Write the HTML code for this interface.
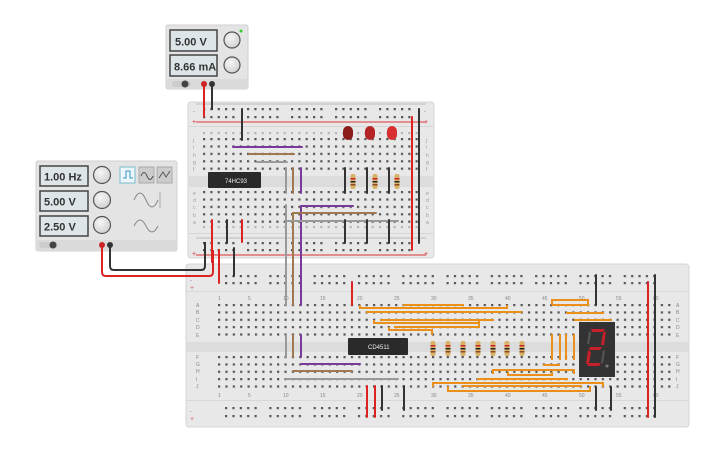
<!DOCTYPE html>
<html><head><meta charset="utf-8"><style>
html,body{margin:0;padding:0;background:#fff;width:725px;height:453px;overflow:hidden}
svg{display:block}
text{font-family:"Liberation Sans",sans-serif}
</style></head><body>
<svg width="725" height="453" viewBox="0 0 725 453" xmlns="http://www.w3.org/2000/svg">
<defs>
<pattern id="h1" x="0" y="0" width="7.33" height="7.4" patternUnits="userSpaceOnUse"><rect x="0" y="0" width="2.2" height="2.2" fill="#555"/></pattern>
<pattern id="r1" x="0" y="0" width="44" height="7.6" patternUnits="userSpaceOnUse"><rect x="0" y="0" width="2.2" height="2.2" fill="#555"/><rect x="7.33" y="0" width="2.2" height="2.2" fill="#555"/><rect x="14.66" y="0" width="2.2" height="2.2" fill="#555"/><rect x="22" y="0" width="2.2" height="2.2" fill="#555"/><rect x="29.3" y="0" width="2.2" height="2.2" fill="#555"/></pattern>
<pattern id="h2" x="0" y="0" width="7.38" height="7.35" patternUnits="userSpaceOnUse"><rect x="0" y="0" width="2.2" height="2.2" fill="#555"/></pattern>
<pattern id="r2" x="0" y="0" width="44.3" height="7.6" patternUnits="userSpaceOnUse"><rect x="0" y="0" width="2.2" height="2.2" fill="#555"/><rect x="7.38" y="0" width="2.2" height="2.2" fill="#555"/><rect x="14.76" y="0" width="2.2" height="2.2" fill="#555"/><rect x="22.1" y="0" width="2.2" height="2.2" fill="#555"/><rect x="29.5" y="0" width="2.2" height="2.2" fill="#555"/></pattern>
<g id="res"><rect x="-2.5" y="0" width="5" height="15" rx="2" fill="#d9b26a"/><rect x="-2.5" y="4" width="5" height="1.5" fill="#c22"/><rect x="-2.5" y="7" width="5" height="1.5" fill="#222"/><rect x="-2.5" y="10" width="5" height="1.5" fill="#8a4a1a"/></g>
<radialGradient id="kn" cx="0.4" cy="0.35" r="0.7"><stop offset="0" stop-color="#f6f6f6"/><stop offset="1" stop-color="#cfcfcf"/></radialGradient>
</defs>

<!-- Power supply -->
<rect x="166" y="25" width="82" height="64" rx="2" fill="#e4e4e4" stroke="#d0d0d0"/>
<rect x="170" y="30" width="47" height="21" fill="#dde5e8" stroke="#444" stroke-width="1.5"/>
<text x="175" y="45.5" font-size="11" font-weight="bold" fill="#333">5.00 V</text>
<rect x="170" y="55" width="47" height="21" fill="#dde5e8" stroke="#444" stroke-width="1.5"/>
<text x="174" y="70.5" font-size="11" font-weight="bold" fill="#333">8.66 mA</text>
<circle cx="232" cy="40" r="8" fill="url(#kn)" stroke="#555" stroke-width="1.2"/>
<circle cx="232" cy="65" r="8" fill="url(#kn)" stroke="#555" stroke-width="1.2"/>
<circle cx="241" cy="31" r="1.5" fill="#3c3"/>
<rect x="166" y="79" width="82" height="10" fill="#dadada"/>
<rect x="172" y="81" width="19" height="6" rx="3" fill="#ccc"/><circle cx="185" cy="84" r="3.5" fill="#444"/>

<!-- Function generator -->
<rect x="36" y="161" width="141" height="90" rx="2" fill="#e4e4e4" stroke="#d0d0d0"/>
<rect x="40" y="166" width="48" height="20" fill="#dde5e8" stroke="#444" stroke-width="1.5"/>
<text x="44" y="180.5" font-size="11" font-weight="bold" fill="#333">1.00 Hz</text>
<rect x="40" y="191" width="48" height="20" fill="#dde5e8" stroke="#444" stroke-width="1.5"/>
<text x="44" y="205.5" font-size="11" font-weight="bold" fill="#333">5.00 V</text>
<rect x="40" y="216" width="48" height="20" fill="#dde5e8" stroke="#444" stroke-width="1.5"/>
<text x="44" y="230.5" font-size="11" font-weight="bold" fill="#333">2.50 V</text>
<circle cx="102" cy="175" r="8.5" fill="url(#kn)" stroke="#555" stroke-width="1.2"/>
<circle cx="102" cy="200" r="8.5" fill="url(#kn)" stroke="#555" stroke-width="1.2"/>
<circle cx="102" cy="225" r="8.5" fill="url(#kn)" stroke="#555" stroke-width="1.2"/>
<rect x="120" y="167" width="15" height="16" fill="#eef6fb" stroke="#7bc" />
<path d="M123 178 h3 v-7 h4 v7 h3" fill="none" stroke="#39c" stroke-width="1"/>
<rect x="139" y="167" width="15" height="16" fill="#ccc" stroke="#aaa"/>
<path d="M141 176 q3 -7 6 0 t6 0" fill="none" stroke="#555"/>
<rect x="157" y="167" width="15" height="16" fill="#ccc" stroke="#aaa"/>
<path d="M159 178 l4 -6 l3 5 l4 -6" fill="none" stroke="#555"/>
<path d="M134 200 q6 -14 12 0 t12 0" fill="none" stroke="#888"/>
<path d="M160 192 v16" stroke="#aaa"/>
<path d="M134 226 q6 -12 12 0 t12 0" fill="none" stroke="#888"/>
<rect x="36" y="240" width="141" height="11" fill="#dadada"/>
<rect x="39" y="242" width="19" height="6" rx="3" fill="#ccc"/><circle cx="53" cy="245" r="3.5" fill="#444"/>

<!-- Board 1 -->
<rect x="188" y="102" width="246" height="156" rx="3" fill="#e8e8e8" stroke="#d4d4d4"/>
<rect x="188" y="126" width="246" height="1" fill="#d6d6d6"/>
<rect x="188" y="176" width="246" height="11" fill="#dcdcdc"/>
<rect x="188" y="233" width="246" height="1" fill="#d6d6d6"/>
<line x1="196" y1="104" x2="426" y2="104" stroke="#bbb"/>
<line x1="196" y1="122" x2="426" y2="122" stroke="#d33" stroke-width="1"/>
<line x1="196" y1="238" x2="426" y2="238" stroke="#bbb"/>
<line x1="196" y1="255" x2="426" y2="255" stroke="#d33" stroke-width="1"/>
<text x="193" y="113" font-size="6" fill="#888">-</text><text x="192" y="124" font-size="7" fill="#d33">+</text>
<text x="424" y="113" font-size="6" fill="#888">-</text><text x="424" y="124" font-size="7" fill="#d33">+</text>
<text x="424" y="256" font-size="7" fill="#d33">+</text><text x="192" y="256" font-size="7" fill="#d33">+</text>
<g fill="#999" font-size="5">
<text x="193" y="142">j</text><text x="193" y="149">i</text><text x="193" y="157">h</text><text x="193" y="164">g</text><text x="193" y="171">f</text>
<text x="193" y="195">e</text><text x="193" y="202">d</text><text x="193" y="209">c</text><text x="193" y="217">b</text><text x="193" y="224">a</text>
<text x="426" y="142">j</text><text x="426" y="149">i</text><text x="426" y="157">h</text><text x="426" y="164">g</text><text x="426" y="171">f</text>
<text x="426" y="195">e</text><text x="426" y="202">d</text><text x="426" y="209">c</text><text x="426" y="217">b</text><text x="426" y="224">a</text>
</g>
<rect x="0" y="0" width="218" height="3" fill="url(#r1)" transform="translate(203,108)"/>
<rect x="0" y="0" width="218" height="3" fill="url(#r1)" transform="translate(203,116)"/>
<rect x="0" y="0" width="218" height="3" fill="url(#h1)" transform="translate(203,132)" opacity="0.35"/>
<rect x="0" y="0" width="218" height="34" fill="url(#h1)" transform="translate(203,138)"/>
<rect x="0" y="0" width="218" height="34" fill="url(#h1)" transform="translate(203,191)"/>
<rect x="0" y="0" width="218" height="3" fill="url(#h1)" transform="translate(203,226)" opacity="0.35"/>
<rect x="0" y="0" width="218" height="3" fill="url(#r1)" transform="translate(203,242)"/>
<rect x="0" y="0" width="218" height="3" fill="url(#r1)" transform="translate(203,249)"/>
<!-- Board 2 -->
<rect x="186" y="264" width="503" height="163" rx="3" fill="#e8e8e8" stroke="#d4d4d4"/>
<rect x="186" y="291" width="503" height="1" fill="#d8d8d8"/>
<rect x="186" y="342" width="503" height="10" fill="#dcdcdc"/>
<rect x="186" y="400" width="503" height="1" fill="#d8d8d8"/>
<rect x="0" y="0" width="440" height="3" fill="url(#r2)" transform="translate(225,275)"/>
<rect x="0" y="0" width="440" height="3" fill="url(#r2)" transform="translate(225,282)"/>
<rect x="0" y="0" width="455" height="34" fill="url(#h2)" transform="translate(218,304)"/>
<rect x="0" y="0" width="455" height="34" fill="url(#h2)" transform="translate(218,356)"/>
<rect x="0" y="0" width="440" height="3" fill="url(#r2)" transform="translate(225,407)"/>
<rect x="0" y="0" width="440" height="3" fill="url(#r2)" transform="translate(225,415)"/>
<text x="190" y="282" font-size="6" fill="#88a">-</text><text x="190" y="290" font-size="7" fill="#d66">+</text>
<text x="190" y="413" font-size="6" fill="#88a">-</text><text x="190" y="421" font-size="7" fill="#d66">+</text>
<g font-size="5" fill="#888">
<text x="196" y="307">A</text><text x="196" y="314">B</text><text x="196" y="322">C</text><text x="196" y="329">D</text><text x="196" y="337">E</text>
<text x="196" y="359">F</text><text x="196" y="366">G</text><text x="196" y="373">H</text><text x="196" y="381">I</text><text x="196" y="388">J</text>
<text x="676" y="307">A</text><text x="676" y="314">B</text><text x="676" y="322">C</text><text x="676" y="329">D</text><text x="676" y="337">E</text>
<text x="676" y="359">F</text><text x="676" y="366">G</text><text x="676" y="373">H</text><text x="676" y="381">I</text><text x="676" y="388">J</text>
<text x="218" y="300">1</text><text x="248" y="300">5</text><text x="283" y="300">10</text><text x="320" y="300">15</text><text x="357" y="300">20</text><text x="394" y="300">25</text><text x="431" y="300">30</text><text x="468" y="300">35</text><text x="505" y="300">40</text><text x="542" y="300">45</text><text x="579" y="300">50</text><text x="616" y="300">55</text><text x="653" y="300">60</text>
<text x="218" y="397">1</text><text x="248" y="397">5</text><text x="283" y="397">10</text><text x="320" y="397">15</text><text x="357" y="397">20</text><text x="394" y="397">25</text><text x="431" y="397">30</text><text x="468" y="397">35</text><text x="505" y="397">40</text><text x="542" y="397">45</text><text x="579" y="397">50</text><text x="616" y="397">55</text><text x="653" y="397">60</text>
</g>

<!-- FG wires -->
<path d="M102 245 V272 Q102 276 106 276 H209 Q213 276 213 272 V250" fill="none" stroke="#d22" stroke-width="2"/>
<path d="M110 245 V266 Q110 270 114 270 H201 Q205 270 205 266 V242" fill="none" stroke="#333" stroke-width="2"/>
<circle cx="102" cy="245" r="3" fill="#c22"/><circle cx="110" cy="245" r="3" fill="#333"/>
<!-- PS wires -->
<path d="M204 84 V117" stroke="#d22" stroke-width="2"/>
<path d="M212 84 V110" stroke="#333" stroke-width="2"/>
<circle cx="204" cy="84" r="3" fill="#c22"/><circle cx="212" cy="84" r="3" fill="#333"/>

<g stroke-width="2" fill="none" stroke-linecap="round">
<path d="M242 109 V140" stroke="#333"/>
<path d="M233 147 H302" stroke="#7a3a9a"/>
<path d="M249 154 H294" stroke="#a07850"/>
<path d="M257 162 H287" stroke="#999"/>
<path d="M286 168 V193 M286 205 V305 M286 335 V357 M286 379 H398" stroke="#999"/>
<path d="M293 168 V193 M293 213 V305 M293 335 V357 M293 371 H352" stroke="#a07850"/>
<path d="M301 168 V193 M301 206 V305 M301 335 V357 M301 364 H360" stroke="#7a3a9a"/>
<path d="M301 206 H353" stroke="#7a3a9a"/>
<path d="M293 213 H376" stroke="#a07850"/>
<path d="M286 221 H398" stroke="#999"/>
<path d="M345 168 V193 M367 168 V193 M389 168 V193 M345 220 V243 M367 220 V243 M389 220 V243" stroke="#333"/>
<path d="M412 117 V250" stroke="#d22"/>
<path d="M419 109 V243" stroke="#333"/>
<path d="M212 220 V262 M242 220 V242 M219 250 V283" stroke="#d22"/>
<path d="M227 220 V243 M234 248 V276" stroke="#333"/>
<path d="M352 282 V305" stroke="#d22"/>
<path d="M596 275 V305 M596 387 V410 M611 387 V410" stroke="#333"/>
<path d="M648 282 V417" stroke="#d22"/>
<path d="M655 275 V417" stroke="#333"/>
<path d="M367 386 V417 M375 386 V417" stroke="#d22"/>
<path d="M382 386 V410 M404 386 V410" stroke="#333"/>
</g>
<g stroke="#e8901a" stroke-width="2" fill="none">
<path d="M403 305 H464"/>
<path d="M360 305 V308 H507 V305"/>
<path d="M366 312 H522"/>
<path d="M374 320 V323 H478"/>
<path d="M380 320 H494"/>
<path d="M389 327 V330 H432 V335"/>
<path d="M394 327 H479 V320"/>
<path d="M552 305 V300 H588 V305 H552"/>
<path d="M566 313 H604"/>
<path d="M574 320 H612"/>
<path d="M552 334 V360 M560 334 V360 M566 334 V360 M574 334 V360"/>
<path d="M543 365 H560"/>
<path d="M493 374 V370 H574 V374"/>
<path d="M508 372 V375 H552 V372"/>
<path d="M477 379 H568"/>
<path d="M433 387 V383 H603 V387"/>
<path d="M462 386 H582"/>
<path d="M448 386 V391 H590 V386"/>
</g>

<!-- ICs -->
<rect x="208" y="172" width="53" height="16" rx="1" fill="#2a2a2a"/>
<text x="225" y="183" font-size="6" fill="#eee">74HC93</text>
<rect x="348" y="338" width="60" height="17" rx="1" fill="#2a2a2a"/>
<text x="368" y="349" font-size="6" fill="#eee">CD4511</text>

<!-- LEDs -->
<rect x="343" y="126" width="10" height="14" rx="5" fill="#8b1a1a"/>
<rect x="365" y="126" width="10" height="14" rx="5" fill="#b52424"/>
<rect x="387" y="126" width="10" height="14" rx="5" fill="#d83030"/>

<use href="#res" x="353" y="174"/><use href="#res" x="375" y="174"/><use href="#res" x="397" y="174"/>
<use href="#res" x="433" y="341"/><use href="#res" x="448" y="341"/><use href="#res" x="463" y="341"/><use href="#res" x="478" y="341"/><use href="#res" x="493" y="341"/><use href="#res" x="507" y="341"/><use href="#res" x="522" y="341"/>

<!-- 7-seg -->
<rect x="579" y="322" width="36" height="55" fill="#333"/>
<g fill="#c8202a">
<path d="M591 329 h14 l-2 3 h-11 z"/>
<path d="M606 331 l-2 14 h-3 l2 -12 z"/>
<path d="M590 347 h12 l-2 3 h-11 z"/>
<path d="M588 350 l-2 14 h3 l2 -12 z"/>
<path d="M587 366 h12 l2 -3 h-12 z"/>
</g>
<path d="M589 331 l-2 13 h2 l2 -11 z M603 350 l-2 13 h2 l2 -12 z" fill="#555"/>
<circle cx="607" cy="366" r="1.5" fill="#777"/>
</svg>
</body></html>
